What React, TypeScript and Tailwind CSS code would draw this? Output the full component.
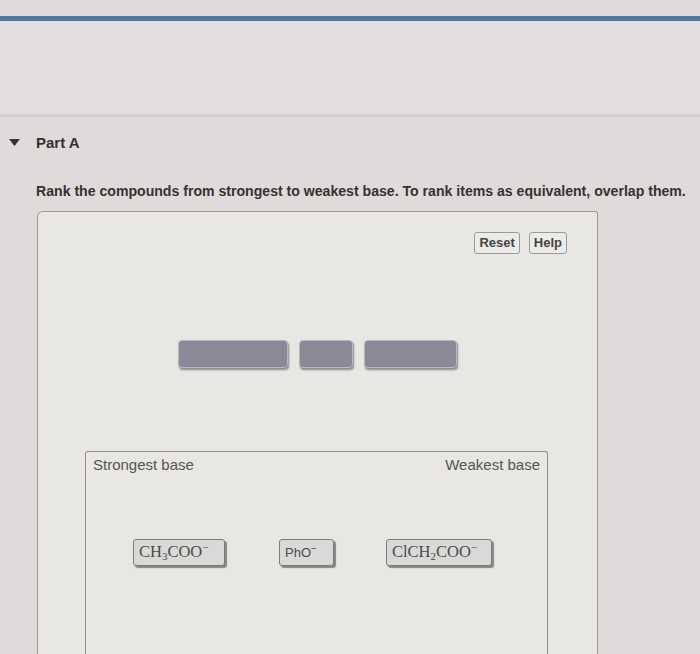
import React from 'react'

const sans = { fontFamily: '"Liberation Sans", Arial, sans-serif' }
const serif = { fontFamily: '"Liberation Serif", "Times New Roman", serif' }

function Slot({ w }: { w: string }) {
  return (
    <div
      className={`${w} h-[28px] rounded-[4px] border border-[#b9b7c2] bg-[#8b8997] shadow-[1px_2px_2px_rgba(60,60,70,0.55)]`}
    />
  )
}

function Item({ w, children }: { w: string; children: React.ReactNode }) {
  return (
    <div
      className={`${w} h-[27px] flex items-center px-[5px] rounded-[3px] border border-[#7c7c80] bg-[#d9d9d8] text-[#4a4a4a] shadow-[2px_2px_1px_rgba(70,70,70,0.6)]`}
    >
      {children}
    </div>
  )
}

export default function App() {
  return (
    <div className="w-[700px] h-[654px] overflow-hidden bg-[#dfdbdb] flex flex-col" style={sans}>
      <div className="h-[16px] shrink-0" />
      <div className="h-[5px] shrink-0 bg-[#4f7aa0]" />
      <div className="h-[93px] shrink-0 bg-[#e3dfdf]" />
      <div className="h-[3px] shrink-0 bg-[#d4d0d0]" />

      <div className="flex items-center h-[52px] shrink-0 pl-[9px]">
        <svg width="11" height="8" viewBox="0 0 11 8" className="mr-[16px]">
          <path d="M0 0 L11 0 L5.5 7 Z" fill="#333" />
        </svg>
        <span className="text-[15px] font-bold text-[#333]">Part A</span>
      </div>

      <div className="pl-[36px] pt-[12px] h-[42px] shrink-0 text-[14.1px] font-bold text-[#333] whitespace-nowrap">
        Rank the compounds from strongest to weakest base. To rank items as equivalent, overlap them.
      </div>

      <div className="ml-[37px] w-[561px] flex-1 border-l border-t border-r border-[#9a9a9a] rounded-tl-[6px] rounded-tr-[3px] bg-[#e8e7e3] flex flex-col">
        <div className="flex justify-end gap-[9px] pr-[30px] pt-[20px]">
          <button className="h-[22px] px-[4px] rounded-[3px] border border-[#9a9a9a] bg-[#ecebe8] text-[13px] font-bold text-[#444]">
            Reset
          </button>
          <button className="h-[22px] px-[4px] rounded-[3px] border border-[#9a9a9a] bg-[#ecebe8] text-[13px] font-bold text-[#444]">
            Help
          </button>
        </div>

        <div className="flex gap-[11px] pl-[140px] pt-[86px]">
          <Slot w="w-[110px]" />
          <Slot w="w-[54px]" />
          <Slot w="w-[93px]" />
        </div>

        <div className="ml-[47px] mt-[83px] w-[463px] flex-1 border-l border-t border-r border-[#8f8f8f] rounded-t-[3px] flex flex-col">
          <div className="flex justify-between px-[7px] pt-[2px] text-[15px] text-[#555]">
            <span>Strongest base</span>
            <span>Weakest base</span>
          </div>
          <div className="flex items-center pl-[47px] pt-[62px]">
            <Item w="w-[92px]">
              <span className="text-[16.5px] leading-none" style={serif}>
                CH<sub className="text-[11px]">3</sub>COO<sup className="text-[11px]">−</sup>
              </span>
            </Item>
            <div className="w-[54px]" />
            <Item w="w-[55px]">
              <span className="text-[13px] leading-none">
                PhO<sup className="text-[10px]">−</sup>
              </span>
            </Item>
            <div className="w-[52px]" />
            <Item w="w-[106px]">
              <span className="text-[16.5px] leading-none" style={serif}>
                ClCH<sub className="text-[11px]">2</sub>COO<sup className="text-[11px]">−</sup>
              </span>
            </Item>
          </div>
        </div>
      </div>
    </div>
  )
}
